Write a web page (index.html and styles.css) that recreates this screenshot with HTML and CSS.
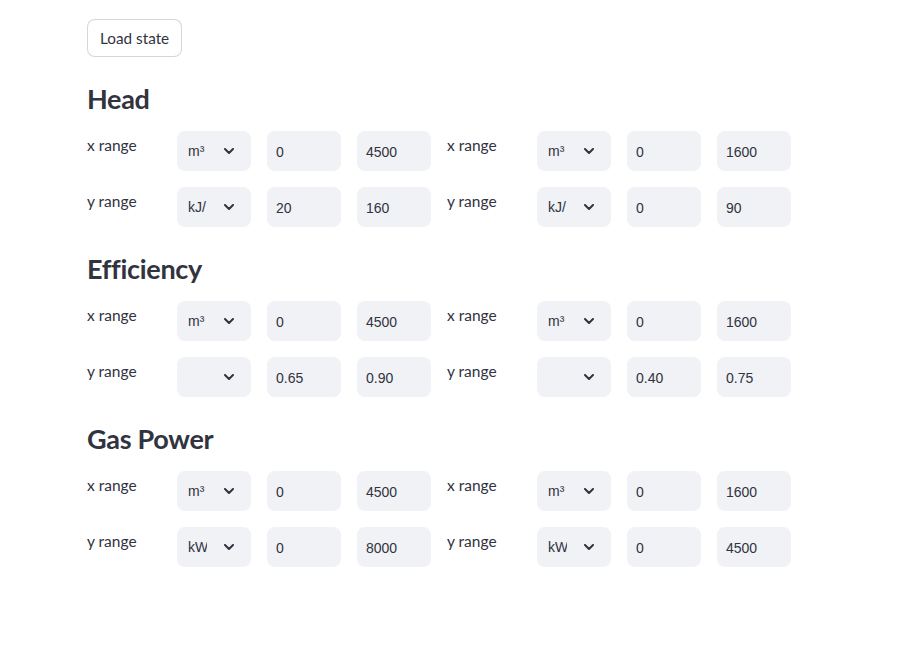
FILE: index.html
```html
<!DOCTYPE html>
<html>
<head>
<meta charset="utf-8">
<link rel="stylesheet" href="styles.css">
</head>
<body>
<div class="main">
  <button class="btn">Load state</button>

  <h3 class="title">Head</h3>
  <div class="grid">
    <div class="label">x range</div>
    <div class="select"><span class="sel-text">m³</span><svg class="chev" viewBox="0 0 10 6"><path d="M1 1l4 4 4-4"/></svg></div>
    <div class="input">0</div>
    <div class="input">4500</div>
    <div class="label">x range</div>
    <div class="select"><span class="sel-text">m³</span><svg class="chev" viewBox="0 0 10 6"><path d="M1 1l4 4 4-4"/></svg></div>
    <div class="input">0</div>
    <div class="input">1600</div>

    <div class="label">y range</div>
    <div class="select"><span class="sel-text">kJ/</span><svg class="chev" viewBox="0 0 10 6"><path d="M1 1l4 4 4-4"/></svg></div>
    <div class="input">20</div>
    <div class="input">160</div>
    <div class="label">y range</div>
    <div class="select"><span class="sel-text">kJ/</span><svg class="chev" viewBox="0 0 10 6"><path d="M1 1l4 4 4-4"/></svg></div>
    <div class="input">0</div>
    <div class="input">90</div>
  </div>

  <h3 class="title">Efficiency</h3>
  <div class="grid">
    <div class="label">x range</div>
    <div class="select"><span class="sel-text">m³</span><svg class="chev" viewBox="0 0 10 6"><path d="M1 1l4 4 4-4"/></svg></div>
    <div class="input">0</div>
    <div class="input">4500</div>
    <div class="label">x range</div>
    <div class="select"><span class="sel-text">m³</span><svg class="chev" viewBox="0 0 10 6"><path d="M1 1l4 4 4-4"/></svg></div>
    <div class="input">0</div>
    <div class="input">1600</div>

    <div class="label">y range</div>
    <div class="select"><span class="sel-text"></span><svg class="chev" viewBox="0 0 10 6"><path d="M1 1l4 4 4-4"/></svg></div>
    <div class="input">0.65</div>
    <div class="input">0.90</div>
    <div class="label">y range</div>
    <div class="select"><span class="sel-text"></span><svg class="chev" viewBox="0 0 10 6"><path d="M1 1l4 4 4-4"/></svg></div>
    <div class="input">0.40</div>
    <div class="input">0.75</div>
  </div>

  <h3 class="title">Gas Power</h3>
  <div class="grid">
    <div class="label">x range</div>
    <div class="select"><span class="sel-text">m³</span><svg class="chev" viewBox="0 0 10 6"><path d="M1 1l4 4 4-4"/></svg></div>
    <div class="input">0</div>
    <div class="input">4500</div>
    <div class="label">x range</div>
    <div class="select"><span class="sel-text">m³</span><svg class="chev" viewBox="0 0 10 6"><path d="M1 1l4 4 4-4"/></svg></div>
    <div class="input">0</div>
    <div class="input">1600</div>

    <div class="label">y range</div>
    <div class="select"><span class="sel-text">kW</span><svg class="chev" viewBox="0 0 10 6"><path d="M1 1l4 4 4-4"/></svg></div>
    <div class="input">0</div>
    <div class="input">8000</div>
    <div class="label">y range</div>
    <div class="select"><span class="sel-text">kW</span><svg class="chev" viewBox="0 0 10 6"><path d="M1 1l4 4 4-4"/></svg></div>
    <div class="input">0</div>
    <div class="input">4500</div>
  </div>
</div>
</body>
</html>
```

FILE: styles.css
```css
html, body {
  margin: 0;
  padding: 0;
  background: #ffffff;
}

body {
  font-family: "Source Sans Pro", Lato, "Noto Sans", sans-serif;
  color: #31333f;
}

.main {
  width: 704px;
  padding: 19px 0 40px 87px;
}

.btn {
  display: block;
  height: 38px;
  padding: 0 12px;
  border: 1px solid rgba(49, 51, 63, 0.2);
  border-radius: 8px;
  background: #ffffff;
  color: #31333f;
  font-family: "Source Sans Pro", Lato, "Noto Sans", sans-serif;
  font-size: 15.3px;
  line-height: 36px;
  cursor: pointer;
}

.title {
  margin: 26px 0 16px 0;
  font-size: 27px;
  font-weight: 700;
  line-height: 32px;
  color: #31333f;
  letter-spacing: -0.3px;
}

.grid {
  display: grid;
  grid-template-columns: repeat(8, 74px);
  grid-auto-rows: 40px;
  column-gap: 16px;
  row-gap: 16px;
}

.label {
  font-size: 15.5px;
  line-height: 26px;
  padding-top: 1px;
  white-space: nowrap;
}

.select {
  display: flex;
  align-items: center;
  height: 40px;
  box-sizing: border-box;
  padding: 0 17px 0 11px;
  background: #f0f2f6;
  border-radius: 8px;
}

.sel-text {
  width: 19px;
  overflow: hidden;
  white-space: nowrap;
  font-family: "Liberation Sans", Arial, sans-serif;
  font-size: 14px;
  color: #31333f;
}

.chev {
  width: 10px;
  height: 6px;
  margin-left: auto;
  fill: none;
  stroke: #31333f;
  stroke-width: 2;
  stroke-linecap: round;
  stroke-linejoin: round;
}

.input {
  height: 40px;
  box-sizing: border-box;
  padding: 0 10px 0 9px;
  background: #f0f2f6;
  border-radius: 8px;
  font-family: "Liberation Sans", Arial, sans-serif;
  font-size: 14px;
  line-height: 42px;
  color: #31333f;
}
```
